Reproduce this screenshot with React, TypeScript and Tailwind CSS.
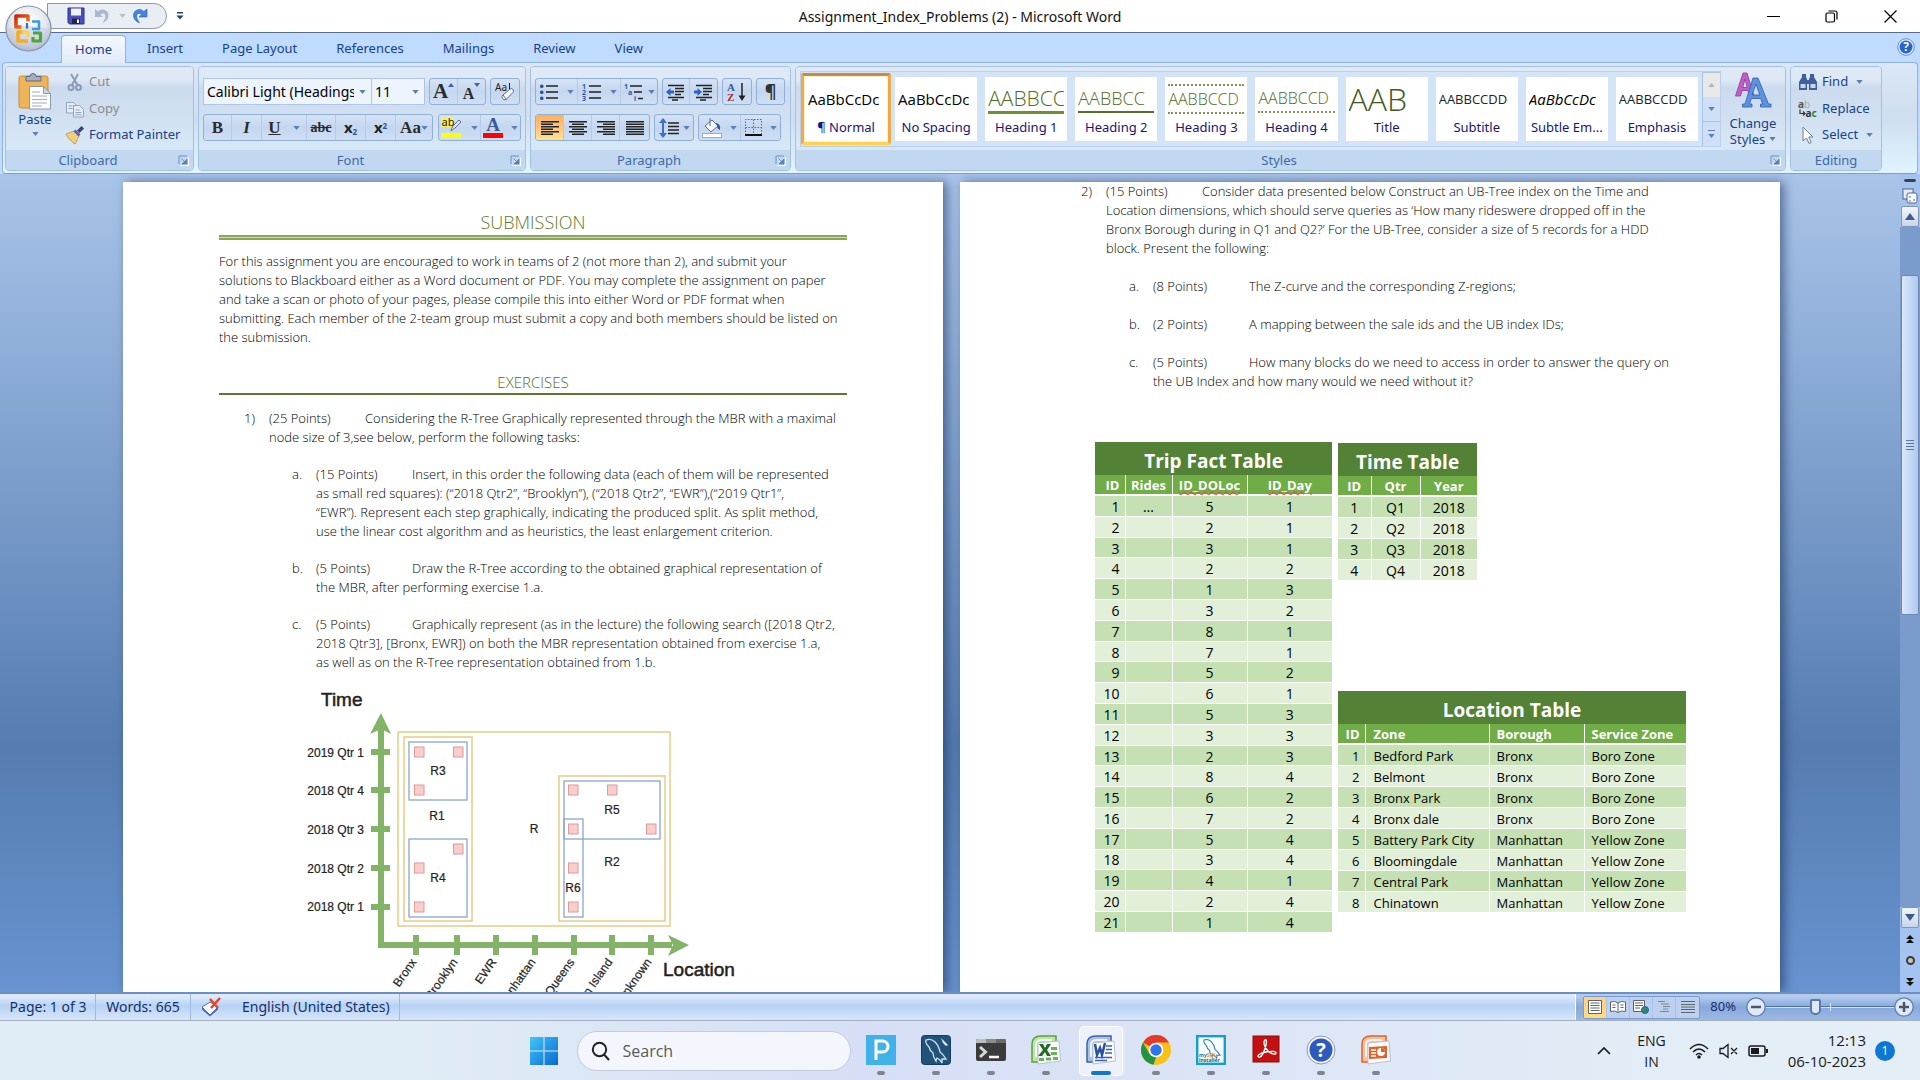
import type { ReactNode } from "react";

type Kids = { children?: ReactNode };

/* ---------- small shared pieces ---------- */

function Caret({ className = "text-[#5b80b8]" }: { className?: string }) {
  return (
    <svg viewBox="0 0 8 5" className={`h-[4px] w-[7px] shrink-0 ${className}`} aria-hidden="true">
      <path d="M0 0h8L4 5z" fill="currentColor" />
    </svg>
  );
}

function Box({ children }: Kids) {
  return (
    <div className="flex h-[27px] divide-x divide-[#b3cae8] overflow-hidden rounded-[3px] border border-[#90b0dc] bg-linear-to-b from-[#d5e3f4] via-[#c4d7ef] to-[#cfdff3]">
      {children}
    </div>
  );
}

function Cell({ label, w, active, children }: Kids & { label: string; w: string; active?: boolean }) {
  return (
    <button
      type="button"
      aria-label={label}
      className={`flex h-full items-center justify-center gap-1 ${w} ${active ? "bg-linear-to-b from-[#fbb15c] via-[#fec47a] to-[#ffe38f]" : ""}`}
    >
      {children}
    </button>
  );
}

function Group({ title, className = "", launcher = true, children }: Kids & { title: string; className?: string; launcher?: boolean }) {
  return (
    <section className={`flex flex-col overflow-hidden rounded-[4px] border border-[#a5c1e2] ${className}`}>
      <div className="flex flex-1 bg-linear-to-b from-[#dfe9f5] from-15% via-[#cbdaed] via-25% to-[#d9e8f6]">{children}</div>
      <div className="flex h-5 items-center bg-[#c1d8f0] text-[13px] leading-5 text-[#3e6aaa]">
        <span className="flex-1 text-center">{title}</span>
        {launcher && (
          <button type="button" aria-label={`${title} options`} className="mr-1 ml-2">
            <svg viewBox="0 0 11 11" className="h-[11px] w-[11px]">
              <path d="M1 9V1h8" fill="none" stroke="#6c8fbf" />
              <path d="M3.500 3.500l4 4M9 4v5H4z" fill="#5a80b5" stroke="#5a80b5" strokeWidth="0.800" />
              <path d="M2.500 10.500h8v-8" fill="none" stroke="#fff" />
            </svg>
          </button>
        )}
      </div>
    </section>
  );
}

function Lines({ rows }: { rows: [number, number][] }) {
  return (
    <svg viewBox="0 0 18 16" className="h-4 w-[18px]" aria-hidden="true">
      {rows.map(([x, w], i) => (
        <rect key={i} x={x} y={1 + i * 2.5} width={w} height="1.500" fill="#222" />
      ))}
    </svg>
  );
}

/* ---------- title bar ---------- */

function OfficeOrb() {
  return (
    <button type="button" aria-label="Office Button" className="absolute top-[4px] left-[5px] z-20">
      <svg viewBox="0 0 48 48" className="h-12 w-12">
        <defs>
          <radialGradient id="orb" cx="50%" cy="35%" r="65%">
            <stop offset="0" stopColor="#ffffff" />
            <stop offset="0.6" stopColor="#e4e8ef" />
            <stop offset="1" stopColor="#a9b6c9" />
          </radialGradient>
          <linearGradient id="orbRed" x1="0" y1="0" x2="1" y2="1">
            <stop offset="0" stopColor="#c8260b" />
            <stop offset="1" stopColor="#f68b1f" />
          </linearGradient>
        </defs>
        <circle cx="23.500" cy="24.500" r="22.500" fill="url(#orb)" stroke="#8793a6" strokeWidth="1.200" />
        <path d="M3 25q20-6 41 0a21 21 0 0 1-41 0z" fill="#b8c7de" opacity="0.450" />
        <g fill="none" strokeLinejoin="round" strokeWidth="3.600">
          <path d="M16.500 23H11V12h12v5.500" stroke="url(#orbRed)" />
          <path d="M27 17.500h7V25h-7" stroke="#3a9be0" strokeWidth="2.600" />
          <path d="M22 24.500v-5.500" stroke="#2f6fc0" strokeWidth="2.200" />
          <path d="M23 37H13v-9h5" stroke="#f8ae1c" />
          <path d="M17 28h6v5" stroke="#fcd04a" strokeWidth="3" />
          <path d="M28 29h7.500v8H28v-4" stroke="#4fa43a" strokeWidth="3.200" />
        </g>
      </svg>
    </button>
  );
}

function TitleBar() {
  return (
    <header className="flex h-[33px] items-stretch border-b border-[#5a6b84] bg-white">
      <div className="flex flex-1 items-start">
        <div className="mt-[3px] ml-[47px] flex h-[26px] w-[120px] items-center gap-2 rounded-r-full border border-[#8d97a6] bg-[#e9eef5] pl-[19px]">
          <button type="button" aria-label="Save">
            <svg viewBox="0 0 18 18" className="h-[18px] w-[18px]">
              <path d="M1 1h16v16H2.500L1 15.500z" fill="#4a4fc0" stroke="#2f2f8c" />
              <path d="M4 1.500h10v7H4z" fill="#eef2ff" />
              <path d="M5 11.500h8V17H5z" fill="#23234a" />
              <path d="M10 12.500h2V16h-2z" fill="#fff" />
            </svg>
          </button>
          <button type="button" aria-label="Undo" className="flex items-center gap-2">
            <svg viewBox="0 0 18 18" className="h-[18px] w-[18px]">
              <path d="M2 2v8h8L7.500 7.500c3-2.500 6.500-.5 4 5L9.500 16c8-3 8-12.500.5-13.500-2-.2-3.600.6-4.800 2z" fill="#a9b9d3" />
            </svg>
            <Caret className="text-[#b9bec8]" />
          </button>
          <button type="button" aria-label="Redo" className="-ml-[3px]">
            <svg viewBox="0 0 18 18" className="h-[18px] w-[18px]">
              <path d="M16 2v8H8l2.500-2.500c-3-2.500-6.500-.5-4 5L8.500 16C.5 13 .5 3.500 8 2.500c2-.2 3.600.6 4.800 2z" fill="#4585dc" stroke="#2a5fae" strokeWidth="0.600" />
            </svg>
          </button>
        </div>
        <button type="button" aria-label="Customize Quick Access Toolbar" className="mt-3 ml-[9px]">
          <svg viewBox="0 0 8 8" className="h-[8px] w-[8px]">
            <path d="M1 0h6v1.500H1zM0.500 3.500h7L4 7.500z" fill="#1f3f7d" />
          </svg>
        </button>
      </div>
      <h1 className="self-center text-[14px] text-[#111]">Assignment_Index_Problems (2) - Microsoft Word</h1>
      <div className="flex flex-1 justify-end">
        <button type="button" aria-label="Minimize" className="flex w-[58px] items-center justify-center">
          <span className="h-px w-[13px] bg-black" />
        </button>
        <button type="button" aria-label="Restore" className="flex w-[58px] items-center justify-center">
          <svg viewBox="0 0 13 13" className="h-[13px] w-[13px]" fill="none" stroke="#000" strokeWidth="1.200">
            <rect x="1" y="3" width="8.500" height="9" rx="1.500" />
            <path d="M3.500 1H10a2 2 0 0 1 2 2v6.500" />
          </svg>
        </button>
        <button type="button" aria-label="Close" className="flex w-[60px] items-center justify-center">
          <svg viewBox="0 0 13 13" className="h-[13px] w-[13px]" stroke="#000" strokeWidth="1.200">
            <path d="M.5.5l12 12M12.500.5l-12 12" />
          </svg>
        </button>
      </div>
    </header>
  );
}

/* ---------- ribbon ---------- */

function TabRow() {
  return (
    <nav className="flex h-[29px] items-end bg-[#bfdbff] pl-[61px] text-[13px] text-[#15428b]">
      <button type="button" className="relative z-10 -mb-px h-[28px] rounded-t-[4px] border border-b-0 border-[#8db2e3] bg-linear-to-b from-[#f4f9ff] to-[#e1ebf7] px-[13px] pt-px">Home</button>
      <div className="flex h-[28px] flex-1 items-center gap-[39px] pt-px pl-[21px]">
        {["Insert", "Page Layout", "References", "Mailings", "Review", "View"].map((t) => (
          <button key={t} type="button">{t}</button>
        ))}
      </div>
      <button type="button" aria-label="Help" className="mr-[5px] mb-[6px]">
        <svg viewBox="0 0 18 18" className="h-[18px] w-[18px]">
          <circle cx="9" cy="9" r="8.300" fill="#dfeafa" stroke="#6d8fc6" />
          <circle cx="9" cy="9" r="6.500" fill="#2464cf" />
          <text x="9" y="13.200" textAnchor="middle" fontSize="12" fontWeight="700" fill="#fff">?</text>
        </svg>
      </button>
    </nav>
  );
}

function Clipboard() {
  return (
    <Group title="Clipboard" className="w-[189px]">
      <button type="button" className="flex w-[58px] flex-col items-center pt-[5px] text-[13px] leading-[18px] text-[#15428b]">
        <svg viewBox="0 0 34 38" className="h-[38px] w-[34px]">
          <rect x="1" y="4" width="29" height="32" rx="2" fill="#efb458" stroke="#c88d37" />
          <path d="M8 9V4.500h4a3 3 0 0 1 6 0h5V9z" fill="#a5aebb" stroke="#5f6b7c" />
          <path d="M11.500 14.500h14l7 7v15.500h-21z" fill="#fdfeff" stroke="#8a98b3" />
          <path d="M25.500 14.500v7h7z" fill="#ccd7ea" stroke="#8a98b3" />
          <path d="M14 20h8M14 24h15M14 27.500h15M14 31h15M14 34h10" stroke="#9fadc6" strokeWidth="1.200" />
        </svg>
        Paste
        <Caret className="mt-1 text-[#5b80b8]" />
      </button>
      <div className="flex flex-1 flex-col justify-between py-[4px] pl-[1px] text-[13px] text-[#15428b]">
        <button type="button" className="flex h-[22px] items-center gap-1 text-[#8d8d8d]">
          <svg viewBox="0 0 20 20" className="h-5 w-5" fill="none" stroke="#8c9bb8" strokeWidth="2">
            <path d="M6 2l6.500 11M13 2L7 13" />
            <circle cx="6" cy="15.500" r="2.500" />
            <circle cx="13.500" cy="15.500" r="2.500" />
          </svg>
          Cut
        </button>
        <button type="button" className="flex h-[22px] items-center gap-1 text-[#8d8d8d]">
          <svg viewBox="0 0 20 20" className="h-5 w-5" fill="#e6ecf5" stroke="#94a3be">
            <path d="M1.500 3.500h7l3 3V14h-10z" />
            <path d="M8.500 6.500h6l4 4v7.500h-10z" />
            <path d="M10.500 11h4M10.500 13.500h6M10.500 15.700h6M3.500 7h4M3.500 9.500h4" fill="none" />
          </svg>
          Copy
        </button>
        <button type="button" className="flex h-[22px] items-center gap-1 whitespace-nowrap">
          <svg viewBox="0 0 20 20" className="h-5 w-5">
            <path d="M1 9l8-3 5 5-4 8c-2-1-3-2-4-4-1.500 0-3-2-5-6z" fill="#f2d079" stroke="#a98a3e" strokeWidth="0.700" />
            <path d="M8.500 6.500l2-2 5 5-2 2z" fill="#5b5fae" />
            <path d="M12 5.500L16.500 1 19 3.500 14.500 8z" fill="#3a3f86" />
          </svg>
          Format Painter
        </button>
      </div>
    </Group>
  );
}

function Combo({ label, value, w }: { label: string; value: string; w: string }) {
  return (
    <label className={`flex h-[27px] items-center gap-[5px] border border-[#abc6ea] bg-[#eef4fc] pr-[5px] ${w}`}>
      <span className="sr-only">{label}</span>
      <select className="min-w-0 flex-1 appearance-none overflow-hidden pl-[3px] text-[14px] whitespace-nowrap text-black outline-none" defaultValue={value}>
        <option>{value}</option>
      </select>
      <Caret />
    </label>
  );
}

function FontGroup() {
  const serif = "font-['Liberation_Serif',serif] text-[#2b2b2b]";
  return (
    <Group title="Font" className="w-[328px]">
      <div className="flex flex-col gap-[9px] pt-[11px] pl-[4px]">
        <div className="flex">
          <Combo label="Font" value="Calibri Light (Headings)" w="w-[169px]" />
          <Combo label="Font size" value="11" w="-ml-px w-[54px]" />
          <div className="ml-[4px]">
            <Box>
              <Cell label="Grow font" w="w-[28px]">
                <span className={`text-[21px] leading-none font-bold ${serif}`}>A</span>
                <svg viewBox="0 0 6 4" className="mt-1 -ml-1 h-[4px] w-[6px] self-start"><path d="M0 4h6L3 0z" fill="#3e63ad" /></svg>
              </Cell>
              <Cell label="Shrink font" w="w-[27px]">
                <span className={`mt-1 text-[16px] leading-none font-bold ${serif}`}>A</span>
                <svg viewBox="0 0 6 4" className="mt-1 -ml-1 h-[4px] w-[6px] self-start"><path d="M0 0h6L3 4z" fill="#3e63ad" /></svg>
              </Cell>
            </Box>
          </div>
          <div className="ml-[4px]">
            <Box>
              <Cell label="Clear formatting" w="w-[28px]">
                <svg viewBox="0 0 22 20" className="h-5 w-[22px]">
                  <text x="1" y="9" fontSize="10" fill="#222">Aa</text>
                  <path d="M15.500 1v8" stroke="#222" />
                  <path d="M9 13l7-6q2-1 3 .5t0 3l-7 7q-2 1-3.500-1t.5-3.500z" fill="#f7f9fd" stroke="#5d6f93" />
                  <path d="M9 13l3.500 4.500" stroke="#5d6f93" />
                </svg>
              </Cell>
            </Box>
          </div>
        </div>
        <div className="flex gap-[5px]">
          <Box>
            <Cell label="Bold" w="w-[28px]"><span className={`text-[17px] font-bold ${serif}`}>B</span></Cell>
            <Cell label="Italic" w="w-[30px]"><span className={`text-[17px] font-bold italic ${serif}`}>I</span></Cell>
            <Cell label="Underline" w="w-[45px]"><span className={`mr-2 text-[17px] font-bold underline ${serif}`}>U</span><Caret /></Cell>
            <Cell label="Strikethrough" w="w-[29px]"><span className={`text-[14px] font-bold line-through ${serif}`}>abc</span></Cell>
            <Cell label="Subscript" w="w-[30px]"><span className="text-[15px] font-bold text-[#222]">x<sub className="text-[8px] text-[#2f55a5]">2</sub></span></Cell>
            <Cell label="Superscript" w="w-[30px]"><span className="text-[15px] font-bold text-[#222]">x<sup className="text-[8px] text-[#2f55a5]">2</sup></span></Cell>
            <Cell label="Change case" w="w-[36px]"><span className={`text-[17px] font-bold ${serif}`}>Aa</span><Caret className="-ml-1 text-[#5b80b8]" /></Cell>
          </Box>
          <Box>
            <Cell label="Text highlight color" w="w-[42px]">
              <svg viewBox="0 0 22 21" className="mr-1 h-[21px] w-[22px]">
                <rect width="13" height="10" fill="#fdf04f" />
                <text x="0.500" y="9" fontSize="11" fill="#222">ab</text>
                <path d="M10 13l2-4 6-6 2 2-6 6-4 3z" fill="#dfe6f2" stroke="#5d6f93" />
                <rect y="16" width="20" height="5" fill="#ffff00" />
              </svg>
              <Caret />
            </Cell>
            <Cell label="Font color" w="w-[39px]">
              <svg viewBox="0 0 20 21" className="mr-1 h-[21px] w-5">
                <text x="10" y="14" textAnchor="middle" fontSize="19" fontWeight="700" className="font-['Liberation_Serif',serif]" fill="#3a5998">A</text>
                <rect y="16" width="20" height="5" fill="#ff0000" />
              </svg>
              <Caret />
            </Cell>
          </Box>
        </div>
      </div>
    </Group>
  );
}

function ListIcon({ kind }: { kind: "dots" | "nums" | "multi" }) {
  return (
    <svg viewBox="0 0 20 18" className="h-[18px] w-5" aria-hidden="true">
      {kind === "dots" && [3, 9, 15].map((y) => <rect key={y} x="1" y={y - 1.5} width="3.500" height="3.500" rx="1.500" fill="#33509c" />)}
      {kind === "nums" && [1, 2, 3].map((n) => <text key={n} x="0" y={n * 6} fontSize="7" fontWeight="700" fill="#2f55a5">{n}</text>)}
      {kind === "multi" ? (
        <>
          <text x="0" y="6" fontSize="7" fontWeight="700" fill="#2f55a5">1</text>
          <text x="4" y="12" fontSize="7" fontWeight="700" fill="#2f55a5">a</text>
          <text x="10" y="18" fontSize="7" fontWeight="700" fill="#2f55a5">i</text>
          <path d="M6 3h12M10 9h8M14 15.500h5" stroke="#222" strokeWidth="1.500" />
        </>
      ) : (
        <path d="M7 3h12M7 9h12M7 15h12" stroke="#222" strokeWidth="1.500" />
      )}
    </svg>
  );
}

function IndentIcon({ out }: { out?: boolean }) {
  return (
    <svg viewBox="0 0 20 18" className="h-[18px] w-5" aria-hidden="true">
      <path d="M2 2.500h16M9 5.500h9M9 8.500h9M9 11.500h6M2 14.500h16M6 17h6" stroke="#222" strokeWidth="1.500" />
      <path d={out ? "M0 9l4.500-4v2.500H8v3H4.500V13z" : "M8 9L3.500 5v2.500H0v3h3.500V13z"} fill="#2f62c4" />
    </svg>
  );
}

function Paragraph() {
  return (
    <Group title="Paragraph" className="w-[261px]">
      <div className="flex flex-col gap-[9px] pt-[11px] pl-[4px]">
        <div className="flex gap-[4px]">
          <Box>
            <Cell label="Bullets" w="w-[42px]"><ListIcon kind="dots" /><Caret className="ml-1 text-[#5b80b8]" /></Cell>
            <Cell label="Numbering" w="w-[43px]"><ListIcon kind="nums" /><Caret className="ml-1 text-[#5b80b8]" /></Cell>
            <Cell label="Multilevel list" w="w-[36px]"><ListIcon kind="multi" /><Caret /></Cell>
          </Box>
          <Box>
            <Cell label="Decrease indent" w="w-[27px]"><IndentIcon out /></Cell>
            <Cell label="Increase indent" w="w-[27px]"><IndentIcon /></Cell>
          </Box>
          <Box>
            <Cell label="Sort" w="w-[28px]">
              <svg viewBox="0 0 20 20" className="h-5 w-5">
                <text x="0" y="9" fontSize="11" fontWeight="700" className="font-['Liberation_Serif',serif]" fill="#2f55a5">A</text>
                <text x="0" y="19" fontSize="11" fontWeight="700" className="font-['Liberation_Serif',serif]" fill="#a32c2c">Z</text>
                <path d="M15 1v14" stroke="#222" strokeWidth="1.500" />
                <path d="M11.500 13.500h7L15 19z" fill="#222" />
              </svg>
            </Cell>
          </Box>
          <Box>
            <Cell label="Show paragraph marks" w="w-[27px]"><span className="text-[18px] font-bold text-[#333]">¶</span></Cell>
          </Box>
        </div>
        <div className="flex gap-[4px]">
          <Box>
            <Cell label="Align left" w="w-[28px]" active><Lines rows={[[0, 18], [0, 12], [0, 18], [0, 12], [0, 18], [0, 12]]} /></Cell>
            <Cell label="Center" w="w-[28px]"><Lines rows={[[0, 18], [3, 12], [0, 18], [3, 12], [0, 18], [3, 12]]} /></Cell>
            <Cell label="Align right" w="w-[28px]"><Lines rows={[[0, 18], [6, 12], [0, 18], [6, 12], [0, 18], [6, 12]]} /></Cell>
            <Cell label="Justify" w="w-[29px]"><Lines rows={[[0, 18], [0, 18], [0, 18], [0, 18], [0, 18], [0, 18]]} /></Cell>
          </Box>
          <Box>
            <Cell label="Line spacing" w="w-[38px]">
              <svg viewBox="0 0 20 20" className="h-5 w-5">
                <path d="M4 0l4 5H5v10h3l-4 5-4-5h3V5H0z" fill="#3e70c8" />
                <path d="M9 5h11M9 8.500h11M9 12h11M9 15.500h11" stroke="#222" strokeWidth="1.500" />
              </svg>
              <Caret />
            </Cell>
          </Box>
          <Box>
            <Cell label="Shading" w="w-[42px]">
              <svg viewBox="0 0 20 20" className="mr-1 h-5 w-5">
                <path d="M3 8l7-6 6 6-7 6z" fill="#f5f8fd" stroke="#5a6c92" />
                <path d="M13 5q6 0 5 7-3-1-3-5z" fill="#2f55a5" />
                <path d="M8 0v8" stroke="#5a6c92" />
                <rect x="0.500" y="15.500" width="19" height="4" fill="#fff" stroke="#a9a9a9" />
              </svg>
              <Caret />
            </Cell>
            <Cell label="Borders" w="w-[39px]">
              <svg viewBox="0 0 17 17" className="mr-1 h-[17px] w-[17px]" fill="none" stroke="#666">
                <path d="M.5 16V.5h16V16M8.500.5V16M.5 8.500h16" strokeDasharray="1.500 1.500" />
                <path d="M0 16h17" stroke="#111" strokeWidth="2" />
              </svg>
              <Caret />
            </Cell>
          </Box>
        </div>
      </div>
    </Group>
  );
}

const styleTiles = [
  { name: "¶ Normal", sample: "AaBbCcDc", cls: "text-[15px] text-black" },
  { name: "No Spacing", sample: "AaBbCcDc", cls: "text-[15px] text-black" },
  { name: "Heading 1", sample: "AABBCC", cls: "text-[21px] font-light text-[#4f6b22] border-b-3 border-[#6b9130]" },
  { name: "Heading 2", sample: "AABBCC", cls: "text-[18px] font-light text-[#4f6b22] border-b-2 border-[#55702a]" },
  { name: "Heading 3", sample: "AABBCCD", cls: "text-[16px] font-light text-[#4f6b22] border-y-2 border-dotted border-[#7d9455]" },
  { name: "Heading 4", sample: "AABBCCD", cls: "text-[16px] font-light text-[#4f6b22] border-b-2 border-dotted border-[#7d9455]" },
  { name: "Title", sample: "AAB", cls: "text-[32px] font-light text-[#3f5b1c]" },
  { name: "Subtitle", sample: "AABBCCDD", cls: "text-[13px] text-[#222]" },
  { name: "Subtle Em...", sample: "AaBbCcDc", cls: "text-[15px] text-black italic" },
  { name: "Emphasis", sample: "AABBCCDD", cls: "text-[13px] text-[#222]" },
];

function StylesGroup() {
  return (
    <Group title="Styles" className="min-w-0 flex-1">
      <div className="mt-[4px] ml-[4px] flex h-[76px] min-w-0 flex-1 border border-[#bcd0ec] bg-[#d4e4f7]">
        <div className="flex min-w-0 flex-1 overflow-hidden">
          {styleTiles.map((s, i) => (
            <button
              key={s.name}
              type="button"
              className={`mt-px h-[72px] min-w-0 flex-1 border-[3px] p-px ${i === 0 ? "rounded-[3px] border-[#f0a945] border-t-[#c58a4c] border-b-[#ffd24d] bg-[#fff3d0]" : "border-transparent"}`}
            >
              <span className="flex h-full w-full flex-col items-center overflow-hidden bg-white px-[3px]">
                <span className="flex h-[40px] w-full items-center overflow-hidden pt-[4px]">
                  <span className={`w-full overflow-hidden text-left font-['Open_Sans',sans-serif] leading-[26px] whitespace-nowrap ${s.cls}`}>{s.sample}</span>
                </span>
                <span className="text-[13px] leading-5 whitespace-nowrap text-[#15157a]">{s.name}</span>
              </span>
            </button>
          ))}
        </div>
        <div className="flex w-[18px] flex-col divide-y divide-[#a9c3e6] border-l border-[#a9c3e6]">
          <button type="button" aria-label="Previous styles" className="flex flex-1 rotate-180 items-center justify-center bg-[#e9e9ea]"><Caret className="text-[#b4b4b4]" /></button>
          <button type="button" aria-label="Next styles" className="flex flex-1 items-center justify-center bg-[#cfdff5]"><Caret /></button>
          <button type="button" aria-label="More styles" className="flex flex-1 flex-col items-center justify-center gap-[3px] bg-[#cfdff5]"><span className="h-px w-[7px] bg-[#5b80b8]" /><Caret /></button>
        </div>
      </div>
      <button type="button" className="flex w-[64px] flex-col items-center pt-[5px] text-[13px] leading-4 text-[#15428b]">
        <svg viewBox="0 0 38 36" className="mb-[7px] h-9 w-[38px]">
          <path d="M9 1h4l7 23h-4.500l-1.500-5.500H8L6.500 24H1.500zM11 7L8.800 15.500h4.400z" fill="#c05fc8" stroke="#8a3a96" strokeWidth="0.800" />
          <path d="M19 6h5l10.500 26h2.500v3H26.500v-3h2.200l-2-5.500H17.300L15.500 32H18v3H8.500v-3H11zM22 12l-4 11h7.800z" fill="#5c92de" stroke="#2f5fae" strokeWidth="0.800" />
        </svg>
        Change
        <span className="flex items-center gap-1">Styles <Caret /></span>
      </button>
    </Group>
  );
}

function Editing() {
  return (
    <Group title="Editing" className="w-[92px]" launcher={false}>
      <div className="flex flex-1 flex-col justify-between py-[4px] pl-[7px] text-[13px] text-[#15428b]">
        <button type="button" className="flex h-[22px] items-center gap-1">
          <svg viewBox="0 0 20 18" className="h-[18px] w-5" fill="#3f5f9c">
            <path d="M4 1h4v3l1 2v11H1V9l3-5zM12 1h4v3l3 5v8h-8V6l1-2z" />
            <path d="M8 7h4v4H8z" />
            <path d="M2.500 11h5v4h-5zM12.500 11h5v4h-5z" fill="#c9d7ef" />
          </svg>
          Find <Caret className="ml-1 text-[#5b80b8]" />
        </button>
        <button type="button" className="flex h-[22px] items-center gap-1">
          <svg viewBox="0 0 20 18" className="h-[18px] w-5">
            <text x="0" y="8" fontSize="10" fontWeight="700" fill="#555">a</text>
            <text x="6" y="8" fontSize="10" fill="#aaa">b</text>
            <path d="M2 9.500v4h5M5 11.500l2 2-2 2" fill="none" stroke="#333" strokeWidth="1.200" />
            <text x="7.500" y="17" fontSize="10" fontWeight="700" fill="#333">a</text>
            <text x="13.500" y="17" fontSize="10" fontWeight="700" fill="#1d8a2a">c</text>
          </svg>
          Replace
        </button>
        <button type="button" className="flex h-[22px] items-center gap-1">
          <svg viewBox="0 0 20 18" className="h-[18px] w-5">
            <path d="M5 1v14l3.500-3 2.500 5.500 2.200-1L10.800 11H15z" fill="#fff" stroke="#6c7f9f" />
          </svg>
          Select <Caret className="ml-1 text-[#5b80b8]" />
        </button>
      </div>
    </Group>
  );
}

function Ribbon() {
  return (
    <div className="bg-[#bfdbff] px-[2px]">
      <div className="flex h-[112px] gap-[4px] rounded-[4px] border border-[#8db2e3] border-b-[#7f9fc9] bg-linear-to-b from-[#dbe7f5] via-[#cfdef0] to-[#e0f4ff] pt-[3px] pr-[35px] pb-[2px] pl-[2px]">
        <Clipboard />
        <FontGroup />
        <Paragraph />
        <StylesGroup />
        <Editing />
      </div>
    </div>
  );
}

/* ---------- document ---------- */

function Item({ mark, points, lines, level = 1 }: { mark: string; points: string; lines: string[]; level?: 1 | 2 }) {
  return (
    <li className={`flex whitespace-nowrap ${level === 1 ? "pl-[25px]" : "pl-[73px]"}`}>
      <span className={`shrink-0 ${level === 1 ? "w-[25px]" : "w-[24px]"}`}>{mark}</span>
      <p>
        <span className="inline-block w-24">{points}</span>
        {lines.map((l, i) => (
          <span key={l}>{i > 0 && <br />}{l}</span>
        ))}
      </p>
    </li>
  );
}

const axis = "#82b366";
const squares: [number, number][] = [
  [139, 72], [178, 72], [139, 110], [178, 169], [139, 188], [139, 227],
  [293, 110], [332, 110], [371, 149], [293, 149], [293, 188], [293, 227],
];
const regions: [string, number, number][] = [
  ["R3", 158, 91], ["R1", 157, 136], ["R4", 158, 198], ["R", 254, 149], ["R5", 332, 130], ["R2", 332, 182], ["R6", 293, 208],
];
const places: [string, number][] = [
  ["Bronx", 136], ["Brooklyn", 177], ["EWR", 216], ["Manhattan", 255], ["Queens", 294], ["Staten Island", 332], ["Unknown", 371],
];

function RTreeChart() {
  return (
    <svg viewBox="0 0 480 360" className="ml-[61px] h-[360px] w-[480px] font-['Liberation_Sans',sans-serif] font-normal" fill="#222" fontSize="12" role="img" aria-label="R-Tree over Time and Location">
      <text x="41" y="26" fontSize="19" stroke="#222" strokeWidth="0.500">Time</text>
      <text x="383" y="296" fontSize="19" stroke="#222" strokeWidth="0.500">Location</text>
      <g stroke={axis} strokeWidth="6" fill="none">
        <path d="M101 48V265H392" />
        {[72, 110, 149, 188, 227].map((y) => <path key={y} d={`M91 ${y}h19`} />)}
        {places.map(([p, x]) => <path key={p} d={`M${x} 255v20`} />)}
      </g>
      <path d="M101 33L111 54 101 49 90 54zM409 265L388 255 393 265 388 276z" fill={axis} />
      <g fill="none" stroke="#e8cc83" strokeWidth="1.500">
        <rect x="118" y="52" width="272" height="194" />
        <rect x="124" y="57" width="68" height="184" />
        <rect x="279" y="96" width="106" height="145" />
      </g>
      <g fill="none" stroke="#87a5d5" strokeWidth="1.300">
        <rect x="129" y="62" width="58" height="58" />
        <rect x="129" y="159" width="58" height="78" />
        <rect x="284" y="101" width="96" height="58" />
        <rect x="284" y="139" width="19" height="98" />
      </g>
      {squares.map(([x, y]) => (
        <rect key={`${x}-${y}`} x={x - 4.5} y={y - 5} width="9.500" height="10" fill="#f8cecc" stroke="#e09a98" />
      ))}
      <g stroke="#222" strokeWidth="0.200">
        {["2019 Qtr 1", "2018 Qtr 4", "2018 Qtr 3", "2018 Qtr 2", "2018 Qtr 1"].map((t, i) => (
          <text key={t} x="84" y={[77, 115, 154, 193, 231][i]} textAnchor="end">{t}</text>
        ))}
        {regions.map(([t, x, y]) => (
          <text key={t} x={x} y={y + 4} textAnchor="middle">{t}</text>
        ))}
        {places.map(([t, x]) => (
          <text key={t} textAnchor="end" transform={`translate(${x + 1} 282) rotate(-55)`}>{t}</text>
        ))}
      </g>
    </svg>
  );
}

const page = "h-full min-w-0 flex-1 overflow-hidden bg-white px-[96px] text-[13px] leading-[19px] font-[350] text-black shadow-[4px_0_10px_rgba(20,40,80,0.55)]";

function PageOne() {
  return (
    <article className={`pt-7 ${page}`}>
      <h2 className="text-center text-[18px] leading-6 text-[#5d7a2c]">SUBMISSION</h2>
      <div className="mt-px h-[5px] border-y-2 border-[#8aa65a] bg-[#cbdab0]" />
      <p className="mt-3 whitespace-nowrap">
        For this assignment you are encouraged to work in teams of 2 (not more than 2), and submit your<br />
        solutions to Blackboard either as a Word document or PDF. You may complete the assignment on paper<br />
        and take a scan or photo of your pages, please compile this into either Word or PDF format when<br />
        submitting. Each member of the 2-team group must submit a copy and both members should be listed on<br />
        the submission.
      </p>
      <h3 className="mt-[25px] text-center text-[15px] leading-5 text-[#4f6b22]">EXERCISES</h3>
      <div className="mt-px h-[2px] bg-[#5d7a2c]" />
      <ol className="mt-[14px] flex flex-col gap-[18px]">
        <Item mark="1)" points="(25 Points)" lines={["Considering the R-Tree Graphically represented through the MBR with a maximal", "node size of 3,see below, perform the following tasks:"]} />
        <Item level={2} mark="a." points="(15 Points)" lines={["Insert, in this order the following data (each of them will be represented", "as small red squares): (“2018 Qtr2”, “Brooklyn”), (“2018 Qtr2”, “EWR”),(“2019 Qtr1”,", "“EWR”). Represent each step graphically, indicating the produced split. As split method,", "use the linear cost algorithm and as heuristics, the least enlargement criterion."]} />
        <Item level={2} mark="b." points="(5 Points)" lines={["Draw the R-Tree according to the obtained graphical representation of", "the MBR, after performing exercise 1.a."]} />
        <Item level={2} mark="c." points="(5 Points)" lines={["Graphically represent (as in the lecture) the following search ([2018 Qtr2,", "2018 Qtr3], [Bronx, EWR]) on both the MBR representation obtained from exercise 1.a,", "as well as on the R-Tree representation obtained from 1.b."]} />
      </ol>
      <div className="mt-2">
        <RTreeChart />
      </div>
    </article>
  );
}

type Col = { name: string; w: string; align: string; wavy?: boolean };

function DataTable({ title, cols, rows, size, body = "text-[14px]" }: { title: string; cols: Col[]; rows: string[][]; size: string; body?: string }) {
  return (
    <table className={`table-fixed border-collapse font-normal text-black ${size}`}>
      <colgroup>
        {cols.map((c) => (
          <col key={c.name} className={c.w} />
        ))}
      </colgroup>
      <thead>
        <tr className="h-[33px] bg-[#538135]">
          <th colSpan={cols.length} className="pt-1 text-[19px] leading-6 text-white">{title}</th>
        </tr>
        <tr className="h-[20px] border-b-2 border-white bg-[#70ad47]">
          {cols.map((c) => (
            <th key={c.name} className={`border-l border-white p-0 text-[13px] leading-[18px] whitespace-nowrap text-white first:border-l-0 ${c.align}`}>
              <span className={c.wavy ? "underline decoration-red-500 decoration-wavy decoration-1 underline-offset-1" : ""}>{c.name}</span>
            </th>
          ))}
        </tr>
      </thead>
      <tbody className={body}>
        {rows.map((r) => (
          <tr key={r[0]} className="border-t border-white odd:bg-[#c5e0b3] even:bg-[#e2efd9]">
            {cols.map((c, i) => (
              <td key={c.name} className={`border-l border-white p-0 pt-[2px] leading-[16px] whitespace-nowrap first:border-l-0 ${c.align}`}>{r[i]}</td>
            ))}
          </tr>
        ))}
      </tbody>
    </table>
  );
}

const doLoc = [5, 2, 3, 2, 1, 3, 8, 7, 5, 6, 5, 3, 2, 8, 6, 7, 5, 3, 4, 2, 1];
const idDay = [1, 1, 1, 2, 3, 2, 1, 1, 2, 1, 3, 3, 3, 4, 2, 2, 4, 4, 1, 4, 4];
const tripRows = doLoc.map((l, i) => [String(i + 1), i === 0 ? "…" : "", String(l), String(idDay[i])]);
const zones = ["Bedford Park", "Belmont", "Bronx Park", "Bronx dale", "Battery Park City", "Bloomingdale", "Central Park", "Chinatown"];
const zoneRows = zones.map((z, i) => [String(i + 1), z, i < 4 ? "Bronx" : "Manhattan", i < 4 ? "Boro Zone" : "Yellow Zone"]);
const timeRows = [1, 2, 3, 4].map((q) => [String(q), `Q${q}`, "2018"]);

function PageTwo() {
  return (
    <article className={page}>
      <ol className="flex flex-col gap-[19px]">
        <Item mark="2)" points="(15 Points)" lines={["Consider data presented below Construct an UB-Tree index on the Time and", "Location dimensions, which should serve queries as ‘How many rideswere dropped off in the", "Bronx Borough during in Q1 and Q2?’ For the UB-Tree, consider a size of 5 records for a HDD", "block. Present the following:"]} />
        <Item level={2} mark="a." points="(8 Points)" lines={["The Z-curve and the corresponding Z-regions;"]} />
        <Item level={2} mark="b." points="(2 Points)" lines={["A mapping between the sale ids and the UB index IDs;"]} />
        <Item level={2} mark="c." points="(5 Points)" lines={["How many blocks do we need to access in order to answer the query on", "the UB Index and how many would we need without it?"]} />
      </ol>
      <div className="mt-[51px] ml-[39px] flex items-start gap-[6px]">
        <DataTable
          title="Trip Fact Table"
          size="h-[490px] w-[237px]"
          rows={tripRows}
          cols={[
            { name: "ID", w: "w-[30px]", align: "text-right pr-[5px]" },
            { name: "Rides", w: "w-[47px]", align: "text-center" },
            { name: "ID_DOLoc", w: "w-[75px]", align: "text-center", wavy: true },
            { name: "ID_Day", w: "w-[85px]", align: "text-center", wavy: true },
          ]}
        />
        <div className="mt-px flex flex-col gap-[111px]">
          <DataTable
            title="Time Table"
            size="h-[137px] w-[139px]"
            rows={timeRows}
            cols={[
              { name: "ID", w: "w-[33px]", align: "text-center" },
              { name: "Qtr", w: "w-[49px]", align: "text-center" },
              { name: "Year", w: "w-[57px]", align: "text-center" },
            ]}
          />
          <DataTable
            title="Location Table"
            size="h-[221px] w-[348px]"
            body="text-[13px]"
            rows={zoneRows}
            cols={[
              { name: "ID", w: "w-[27px]", align: "text-right pr-[5px]" },
              { name: "Zone", w: "w-[124px]", align: "text-left pl-[8px]" },
              { name: "Borough", w: "w-[95px]", align: "text-left pl-[7px]" },
              { name: "Service Zone", w: "w-[102px]", align: "text-left pl-[7px]" },
            ]}
          />
        </div>
      </div>
    </article>
  );
}

function ScrollArrow({ down }: { down?: boolean }) {
  return (
    <button type="button" aria-label={down ? "Scroll down" : "Scroll up"} className="flex h-[21px] w-[18px] shrink-0 items-center justify-center rounded-[2px] border border-[#8496b8] bg-linear-to-b from-[#f2f6fc] to-[#c9d6ea]">
      <svg viewBox="0 0 10 7" className={`h-[7px] w-[10px] ${down ? "" : "rotate-180"}`}><path d="M0 0h10L5 7z" fill="#3f5b8e" /></svg>
    </button>
  );
}

function VerticalScrollbar() {
  return (
    <div className="flex w-5 flex-col items-center bg-linear-to-b from-[#a4c2ec] to-[#a5c3f0] pt-[5px]">
      <div className="h-[3px] w-[12px] rounded-sm border border-[#33415c] bg-[#33415c]" />
      <svg viewBox="0 0 16 16" className="mt-[6px] mb-[2px] h-4 w-4 shrink-0">
        <rect x="1" y="1" width="10" height="10" fill="#e3ebf8" stroke="#55678c" />
        <rect x="5" y="5" width="10" height="10" rx="2" fill="#f6f9fe" stroke="#55678c" />
        <path d="M8 8v2M8 12v2M11 12h2" stroke="#55678c" />
      </svg>
      <ScrollArrow />
      <div className="flex w-full flex-1 flex-col items-center bg-[#7b9bcc] px-px">
        <div className="h-[48px]" />
        <div className="flex h-[340px] w-[18px] flex-col items-center justify-center gap-[2px] rounded-[2px] border border-[#6c86b3] bg-linear-to-r from-[#dce8fa] to-[#b0c9ee]">
          <span className="h-px w-2 bg-[#5a76a6]" />
          <span className="h-px w-2 bg-[#5a76a6]" />
          <span className="h-px w-2 bg-[#5a76a6]" />
          <span className="h-px w-2 bg-[#5a76a6]" />
        </div>
      </div>
      <ScrollArrow down />
      <div className="flex h-[64px] flex-col items-center justify-around">
        <button type="button" aria-label="Previous page"><svg viewBox="0 0 8 8" className="h-2 w-2"><path d="M0 4l4-4 4 4zM0 8l4-4 4 4z" fill="#111" /></svg></button>
        <button type="button" aria-label="Select browse object" className="h-[9px] w-[9px] rounded-full border-2 border-[#3a3a3a] bg-[#c5c5c5]" />
        <button type="button" aria-label="Next page"><svg viewBox="0 0 8 8" className="h-2 w-2"><path d="M0 0l4 4 4-4zM0 4l4 4 4-4z" fill="#111" /></svg></button>
      </div>
    </div>
  );
}

/* ---------- status bar ---------- */

function ViewButton({ label, active, children }: Kids & { label: string; active?: boolean }) {
  return (
    <button type="button" aria-label={label} className={`flex w-[23px] items-center justify-center ${active ? "bg-linear-to-b from-[#fbd08a] to-[#ffdc7c]" : ""}`}>
      <svg viewBox="0 0 16 14" className="h-[14px] w-4" fill="none" stroke="#5c6470">{children}</svg>
    </button>
  );
}

function ZoomButton({ plus }: { plus?: boolean }) {
  return (
    <button type="button" aria-label={plus ? "Zoom in" : "Zoom out"}>
      <svg viewBox="0 0 20 20" className="h-5 w-5">
        <circle cx="10" cy="10" r="9.200" fill="#dfe9f8" stroke="#5f7fb4" strokeWidth="1.300" />
        <path d={plus ? "M5 10h10M10 5v10" : "M5 10h10"} stroke="#4b5567" strokeWidth="2.500" />
      </svg>
    </button>
  );
}

function StatusBar() {
  return (
    <footer className="flex h-[29px] shrink-0 items-stretch border-t-2 border-b border-t-[#6c8fc4] border-b-[#a6afbd] bg-linear-to-b from-[#dce9fb] from-10% via-[#b7d2f5] via-45% to-[#d7e6fa] text-[14px] text-[#15306b]">
      <button type="button" className="w-[96px] border-r border-[#9dbbe3] pb-[2px] pl-[1px]">Page: 1 of 3</button>
      <button type="button" className="w-[95px] border-r border-[#9dbbe3] pb-[2px]">Words: 665</button>
      <button type="button" aria-label="Proofing errors" className="flex w-[42px] items-center justify-center">
        <svg viewBox="0 0 22 20" className="h-5 w-[22px]">
          <path d="M1 10l8-5 8 5-8 8z" fill="#f5f8fe" stroke="#5472b0" />
          <path d="M1 10l8 8v1.500L1 12.500zM17 10l-8 8v1.500l8-7z" fill="#4368b8" />
          <path d="M9 2l8 9M19 1l-9 10" stroke="#e4452b" strokeWidth="2.500" />
        </svg>
      </button>
      <button type="button" className="border-r border-[#9dbbe3] px-[9px] pb-[2px]">English (United States)</button>
      <div className="flex-1" />
      <div className="flex items-center border-l border-white bg-linear-to-b from-[#b3cbee] from-10% via-[#87a8dc] via-50% to-[#9dbae6] pr-[6px] pl-[7px]">
        <div className="flex h-[23px] divide-x divide-[#a9c2e6] overflow-hidden rounded-[2px] border border-[#7b9bcf] bg-[#bdd1ee]">
          <ViewButton label="Print layout" active><path d="M1.500.5h13v13h-13z" fill="#fff" /><path d="M3.500 3h9M3.500 5.500h9M3.500 8h9M3.500 10.500h9" /></ViewButton>
          <ViewButton label="Full screen reading"><path d="M8 3Q5 .5.5 2v9.500Q5 10 8 12.500q3-2.500 7.500-1V2Q11 .5 8 3v9" fill="#fff" /><path d="M2.500 5h3M2.500 7.500h3M10.500 5h3M10.500 7.500h3" /></ViewButton>
          <ViewButton label="Web layout"><path d="M.5.5h11v11H.5z" fill="#fff" /><path d="M2 3h8M2 5.500h8M2 8h5" /><circle cx="12" cy="10" r="3.500" fill="#2e8b6f" stroke="#2a5fa5" /></ViewButton>
          <ViewButton label="Outline"><path d="M2 1.500h7M5 4h8M7 6.500h7M7 9h5M4 11.500h9" stroke="#7c8596" /></ViewButton>
          <ViewButton label="Draft"><path d="M1 1.500h14M1 4.500h14M1 7h14M1 9.500h14M1 12.500h14" /></ViewButton>
        </div>
        <button type="button" className="mx-[10px] pb-px text-[13px]">80%</button>
        <ZoomButton />
        <label className="relative flex w-[128px] items-center">
          <span className="sr-only">Zoom</span>
          <span className="absolute left-[64px] h-2 w-px bg-[#dbe7f8]" />
          <input
            type="range"
            min="0"
            max="100"
            defaultValue="38"
            className="h-[18px] w-full appearance-none bg-transparent [&::-webkit-slider-runnable-track]:h-[2px] [&::-webkit-slider-runnable-track]:border-t [&::-webkit-slider-runnable-track]:border-[#4f72ac] [&::-webkit-slider-runnable-track]:bg-[#d5e3f8] [&::-webkit-slider-thumb]:-mt-2 [&::-webkit-slider-thumb]:h-4 [&::-webkit-slider-thumb]:w-[11px] [&::-webkit-slider-thumb]:appearance-none [&::-webkit-slider-thumb]:rounded-t-[2px] [&::-webkit-slider-thumb]:rounded-b-[5px] [&::-webkit-slider-thumb]:border-2 [&::-webkit-slider-thumb]:border-[#5b77a8] [&::-webkit-slider-thumb]:bg-[#dfe8f6]"
          />
        </label>
        <ZoomButton plus />
      </div>
    </footer>
  );
}

/* ---------- taskbar ---------- */

function Dolphin({ color }: { color: string }) {
  return <path d="M5 5q5-2 9 2 4 4 5 10 3 2 6 7l-4 0 0 4q-2-4-5-5-1 2-1 3-3-4-3-8-3-2-4-6-4-4-3-7z" fill="none" stroke={color} strokeWidth="1.300" />;
}

function OfficeApp({ c1, c2, children }: Kids & { c1: string; c2: string }) {
  return (
    <>
      <path d="M1 27V9q0-8 9-8h15v20q-8 6-16 6z" fill={c2} stroke={c1} strokeWidth="1.500" />
      <path d="M5 22V10q0-5 6-5h10" fill="none" stroke="#fff" strokeWidth="2" opacity="0.800" />
      <path d="M7 8l21-2 1.500 20L7 29z" fill="#fbfcff" stroke="#b7c0cf" />
      {children}
    </>
  );
}

const apps: { name: string; icon: ReactNode; active?: boolean }[] = [
  { name: "Pandora", icon: <><rect width="30" height="30" fill="#41b1ea" /><path d="M10 25V6h6.500a5.500 5.500 0 0 1 0 11H11" fill="none" stroke="#fff" strokeWidth="3" /></> },
  { name: "MySQL Workbench", icon: <><rect x="0.500" y="0.500" width="29" height="29" rx="3" fill="#20527a" stroke="#173d5c" /><Dolphin color="#cfe3f2" /><path d="M20 3l7 7-2 1-3-3z" fill="#e8eef4" /></> },
  { name: "Terminal", icon: <><rect y="4" width="30" height="22" rx="2" fill="#3b3b3b" /><path d="M0 8V6a2 2 0 0 1 2-2h8v4z" fill="#bdbdbd" /><path d="M10 4h10v4H10z" fill="#8d8d8d" /><path d="M20 4h8a2 2 0 0 1 2 2v2H20z" fill="#6a6a6a" /><path d="M4 12l5.500 5L4 22" fill="none" stroke="#d8d8d8" strokeWidth="3" /><path d="M13 22h10" stroke="#fff" strokeWidth="2.500" /></> },
  { name: "Excel", icon: <OfficeApp c1="#57a436" c2="#bfe3a9"><path d="M8 9l4 0 2 4 2-4h4l-4 6 4 6h-4l-2-4-3 4H7l5-6z" fill="#1f6b1f" /><path d="M20 12h6v3h-6zM20 17h6v3h-6zM8 23h5v3H8zM15 22.500h5v3h-5zM22 22h5v3h-5z" fill="#69b357" /></OfficeApp> },
  { name: "Word", active: true, icon: <OfficeApp c1="#3a62ac" c2="#a9c2ec"><path d="M9 9l2 11 3-7 2 7 3-12" fill="none" stroke="#2b4f9f" strokeWidth="2.500" /><path d="M20 11h6M20 14.500h6M19 18h7M9 22.500h17M9 25.500h12" stroke="#3a62ac" strokeWidth="1.700" /></OfficeApp> },
  { name: "Chrome", icon: <><circle cx="15" cy="15" r="15" fill="#fbc116" /><path d="M15 15L2 7.500A15 15 0 0 1 28 7.500H15z" fill="#e33b2e" /><path d="M2 7.500L8.500 18.700 15 22.500 12.500 29.800A15 15 0 0 1 2 7.500z" fill="#229342" /><circle cx="15" cy="15" r="7.300" fill="#fff" /><circle cx="15" cy="15" r="5.700" fill="#2f74ea" /></> },
  { name: "MySQL Installer", icon: <><rect x="1.200" y="1.200" width="27.600" height="27.600" fill="#f6fbfd" stroke="#12a0c8" strokeWidth="2.400" /><g transform="translate(4 1) scale(0.8)"><Dolphin color="#2c7d9e" /></g><text x="3" y="22" fontSize="5" fontWeight="700" fill="#2f7d9c">my<tspan fill="#e8963a">SQL</tspan></text><text x="3" y="27" fontSize="5" fontWeight="700" fill="#205f7c">installer</text></> },
  { name: "Adobe Reader", icon: <><rect x="2" y="1" width="26" height="26" fill="#c4100f" stroke="#8d0a0a" /><path d="M8 22c-3-1 1-4 7-5s10-1 10 1-5 1-8-2-5-8-3.500-10.500S16 6 15 10 11 23 8 22z" fill="none" stroke="#fff" strokeWidth="1.400" /></> },
  { name: "Help", icon: <><circle cx="15" cy="15" r="14" fill="#f2f5fb" stroke="#8e9bb5" /><circle cx="15" cy="15" r="11.500" fill="#2c5bbd" /><text x="15" y="22" textAnchor="middle" fontSize="20" fontWeight="700" fill="#fff">?</text></> },
  { name: "PowerPoint", icon: <OfficeApp c1="#e2622b" c2="#f8c2a2"><path d="M8 12l18-1v12L8 24z" fill="#e2622b" /><circle cx="20" cy="17" r="4" fill="#fff" /><path d="M20 17h4a4 4 0 0 0-4-4z" fill="#e2622b" /><path d="M10 15h5M10 18h5M10 21h5" stroke="#fff" strokeWidth="1.500" /></OfficeApp> },
];

function Taskbar() {
  return (
    <div className="grid h-[59px] shrink-0 grid-cols-[1fr_auto_1fr] items-center bg-linear-to-r from-[#e1edf6] from-20% via-[#d6dff5] via-45% to-[#e3eef7] to-90% font-['Open_Sans',sans-serif]">
      <div />
      <div className="ml-3 flex items-center">
        <button type="button" aria-label="Start" className="mr-[18px]">
          <svg viewBox="0 0 30 30" className="h-[30px] w-[30px]">
            <defs>
              <linearGradient id="win" gradientUnits="userSpaceOnUse" x1="0" y1="0" x2="30" y2="30">
                <stop offset="0" stopColor="#45c8fb" />
                <stop offset="1" stopColor="#0467cf" />
              </linearGradient>
            </defs>
            <path d="M1 1h13.500v13.500H1zM15.500 1H29v13.500H15.500zM1 15.500h13.500V29H1zM15.500 15.500H29V29H15.500z" fill="url(#win)" />
          </svg>
        </button>
        <label className="flex h-10 w-[274px] items-center gap-3 rounded-full border border-[#c3cadb] bg-[#f3f7fd] pl-[13px]">
          <svg viewBox="0 0 20 20" className="h-5 w-5" fill="none" stroke="#222" strokeWidth="2">
            <circle cx="8.500" cy="8.500" r="6.700" />
            <path d="M13 13.500l5 5.500" />
          </svg>
          <span className="sr-only">Search</span>
          <input type="text" placeholder="Search" className="min-w-0 flex-1 bg-transparent text-[16px] outline-none placeholder:text-[#5a5a5a]" />
        </label>
        <div className="ml-[3px] flex">
          {apps.map((a) => (
            <button key={a.name} type="button" aria-label={a.name} className="flex w-[55px] flex-col items-center">
              <span className={`flex flex-col items-center rounded-[5px] border px-[6px] pt-2 ${a.active ? "border-white bg-[#eef1fa] shadow-[3px_0_0_#e3e7f3]" : "border-transparent"}`}>
                <svg viewBox="0 0 30 30" className="h-[30px] w-[30px]">{a.icon}</svg>
                <span className={`mt-[6px] h-1 rounded-full ${a.active ? "w-5 bg-[#0d78d4]" : "w-2 bg-[#7f8491]"}`} />
              </span>
            </button>
          ))}
        </div>
      </div>
      <div className="flex items-center justify-end pr-[25px] text-[15px] leading-[21px] text-[#1a1a1a]">
        <button type="button" aria-label="Show hidden icons" className="mr-[26px]">
          <svg viewBox="0 0 14 8" className="h-2 w-[14px]" fill="none" stroke="#1a1a1a" strokeWidth="1.700"><path d="M1 7l6-6 6 6" /></svg>
        </button>
        <button type="button" className="text-center text-[14px]">ENG<br />IN</button>
        <button type="button" aria-label="Network, volume and battery" className="ml-[23px] flex items-center gap-[10px]">
          <svg viewBox="0 0 20 16" className="h-4 w-5" fill="none" stroke="#1a1a1a" strokeWidth="1.600">
            <path d="M1 6q9-9 18 0M4 9q6-6 12 0M7 12q3-3 6 0" />
            <circle cx="10" cy="14" r="1" fill="#1a1a1a" />
          </svg>
          <svg viewBox="0 0 19 16" className="h-4 w-[19px]" fill="none" stroke="#1a1a1a" strokeWidth="1.300">
            <path d="M1 5.500h3L9 1.500v13l-5-4H1zM12 5l6 6M18 5l-6 6" />
          </svg>
          <svg viewBox="0 0 20 12" className="h-3 w-5" fill="none" stroke="#1a1a1a" strokeWidth="1.500">
            <rect x="1" y="1" width="16" height="10" rx="2" />
            <rect x="3" y="3" width="8" height="6" fill="#1a1a1a" stroke="none" />
            <path d="M19 4v4" strokeWidth="2" />
          </svg>
        </button>
        <button type="button" className="ml-[20px] text-right">12:13<br />06-10-2023</button>
        <span className="ml-[9px] flex h-5 w-5 items-center justify-center rounded-full bg-[#0d78d4] text-[12px] text-white">1</span>
      </div>
    </div>
  );
}

export default function App() {
  return (
    <div className="relative flex h-screen flex-col overflow-hidden bg-[#a7c3ea] font-['Noto_Sans','Open_Sans',sans-serif]">
      <OfficeOrb />
      <TitleBar />
      <TabRow />
      <Ribbon />
      <main className="flex min-h-0 flex-1">
        <div className="flex min-w-0 flex-1 gap-[17px] overflow-hidden bg-linear-to-b from-[#a9c4ea] via-[#557db1] via-70% to-[#6893d0] pt-2 pr-[120px] pl-[123px] font-['Open_Sans',sans-serif]">
          <PageOne />
          <PageTwo />
        </div>
        <VerticalScrollbar />
      </main>
      <StatusBar />
      <Taskbar />
    </div>
  );
}
